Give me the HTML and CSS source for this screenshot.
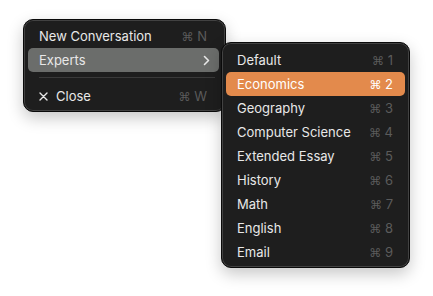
FILE: index.html
```html
<!DOCTYPE html>
<html lang="en">
<head>
	<meta charset="UTF-8">
	<title>menu</title>
	<link rel="stylesheet" href="styles.css">
</head>
<body>

	<div class="stage">
		<ul class="menu main">
			<li class="item"><span class="label">New Conversation</span><span class="key"><span class="cmd">⌘</span> N</span></li>
			<li class="item hover"><span class="label">Experts</span>
				<svg class="chev" width="7" height="11" viewBox="0 0 7 11"><path d="M1.5 1.5 L5.5 5.5 L1.5 9.5" fill="none" stroke="#e8e8e8" stroke-width="1.6" stroke-linecap="round" stroke-linejoin="round"/></svg>
			</li>
			<li class="sep"></li>
			<li class="item"><span class="label"><svg class="x" width="9" height="9" viewBox="0 0 9 9"><path d="M1 1 L8 8 M8 1 L1 8" stroke="#e8e8e8" stroke-width="1.4" stroke-linecap="round"/></svg>Close</span><span class="key"><span class="cmd">⌘</span> W</span></li>
		</ul>

		<ul class="menu sub">
			<li class="item"><span class="label">Default</span><span class="key"><span class="cmd">⌘</span> 1</span></li>
			<li class="item active"><span class="label">Economics</span><span class="key"><span class="cmd">⌘</span> 2</span></li>
			<li class="item"><span class="label">Geography</span><span class="key"><span class="cmd">⌘</span> 3</span></li>
			<li class="item"><span class="label">Computer Science</span><span class="key"><span class="cmd">⌘</span> 4</span></li>
			<li class="item"><span class="label">Extended Essay</span><span class="key"><span class="cmd">⌘</span> 5</span></li>
			<li class="item"><span class="label">History</span><span class="key"><span class="cmd">⌘</span> 6</span></li>
			<li class="item"><span class="label">Math</span><span class="key"><span class="cmd">⌘</span> 7</span></li>
			<li class="item"><span class="label">English</span><span class="key"><span class="cmd">⌘</span> 8</span></li>
			<li class="item"><span class="label">Email</span><span class="key"><span class="cmd">⌘</span> 9</span></li>
		</ul>
	</div>

</body>
</html>
```

FILE: styles.css
```css
body{
	margin:0;
	background:#fff;
	font-family: Inter, "Noto Sans", sans-serif;
	font-size:13px;
	font-weight:400;
	color:#e8e8e8;
}
.stage{
	position:relative;
	padding:19px 0 0 23px;
	height:277px;
}
.menu{
	list-style:none;
	margin:0;
	background:#1e1e1e;
	border:1px solid #0a0a0a;
	border-radius:10px;
	box-shadow: inset 0 0 0 1px rgba(255,255,255,.16), 0 6px 16px rgba(0,0,0,.22);
	box-sizing:border-box;
}
.main{
	width:203px;
	padding:4px 6px 3px 4px;
}
.sub{
	position:absolute;
	left:221px;
	top:42px;
	width:189px;
	padding:5px 4px 3px 4px;
}
.item{
	display:flex;
	align-items:center;
	justify-content:space-between;
	height:24px;
	padding:0 12px 0 11px;
	border-radius:5px;
}
.label{
	display:flex;
	align-items:center;
}
.key{
	color:#5b5b5b;
}
.cmd{
	font-family:"DejaVu Sans", sans-serif;
	font-size:12px;
}
.hover{
	background:#6b6d6b;
	padding-right:9px;
}
.active{
	background:#e38a4c;
	color:#fff;
}
.active .key{
	color:#fff;
}
.sep{
	height:1px;
	background:#3a3a3a;
	margin:5px 0 6px 11px;
	width:176px;
}
.x{
	margin-right:8px;
}
```
